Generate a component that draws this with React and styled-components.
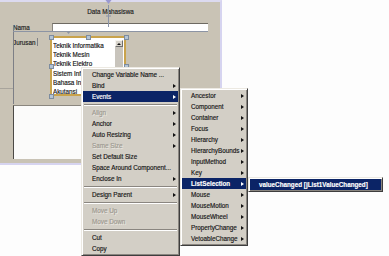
import React from "react";
import styled, { createGlobalStyle, css } from "styled-components";

const GlobalStyle = createGlobalStyle`
  html, body {
    margin: 0;
    padding: 0;
    background: #fdfdfd;
  }
  body {
    font-family: "Liberation Sans", Arial, sans-serif;
    font-size: 6.3px;
    color: #161616;
    -webkit-text-stroke: 0.15px currentColor;
  }
`;

const Page = styled.div`
  position: relative;
  width: 389px;
  height: 256px;
  overflow: hidden;
  background: #fdfdfd;
`;

const Form = styled.div`
  position: relative;
  width: 208px;
  height: 158px;
  padding: 0 12px 3px 0;
  background: #c9c3b5;
  border-top: 2px solid #dcdaf0;
  border-right: 2px solid #d6d4f0;
  border-bottom: 2px solid #d6d4f0;
  display: flex;
  flex-direction: column;
`;

const Title = styled.div`
  margin-top: 5px;
  height: 10px;
  line-height: 10px;
  padding-left: 13px;
  text-align: center;
  color: #202020;
`;

const Row = styled.div`
  display: grid;
  grid-template-columns: 37px 1fr;
  padding-left: 13px;
  margin-top: ${({ $gap }) => $gap}px;
`;

const Label = styled.div`
  line-height: ${({ $lh }) => $lh}px;
  white-space: nowrap;
  color: #1c1c1c;
`;

const TextField = styled.div`
  margin-left: 2px;
  height: 7px;
  background: #fff;
  border-top: 1px solid #6e6a62;
  border-left: 1px solid #8a867e;
`;

const ListBox = styled.div`
  position: relative;
  width: 72px;
  height: 56px;
  border: 2px solid #c9a34c;
  background: #fff;
  display: flex;
`;

const ListItems = styled.div`
  flex: 1;
  padding: 3px 0 0 1px;
`;

const ListItem = styled.div`
  height: 9.2px;
  line-height: 9.2px;
  white-space: nowrap;
  overflow: hidden;
  color: #141414;
`;

const ScrollBar = styled.div`
  width: 8px;
  margin: 2px 1px 2px 0;
  display: flex;
  flex-direction: column;
  background: #c8c4bc;
`;

const ScrollButton = styled.div`
  height: 7px;
  background: #d8d4cc;
  border: 1px solid;
  border-color: #f6f4f0 #707070 #707070 #f6f4f0;
  box-sizing: border-box;
  display: flex;
  align-items: center;
  justify-content: center;
  &::before {
    content: "";
    border-left: 2px solid transparent;
    border-right: 2px solid transparent;
    border-bottom: 2px solid #111;
  }
`;

const Handle = styled.span`
  position: absolute;
  width: 3px;
  height: 3px;
  background: #b4c4d4;
  border: 1px solid #7c8ca0;
  ${({ $x, $y }) => css`
    left: ${$x};
    top: ${$y};
  `}
`;

const TextArea = styled.div`
  margin: 9px 0 0 13px;
  height: 53px;
  background: #fbfbfa;
  border-left: 1px solid #4c4a46;
  border-top: 1px solid #8a867e;
`;

const Guides = styled.svg`
  position: absolute;
  left: 0;
  top: -2px;
  pointer-events: none;
`;

const Menu = styled.div`
  position: absolute;
  left: ${({ $x }) => $x}px;
  top: ${({ $y }) => $y}px;
  width: ${({ $w }) => $w}px;
  box-sizing: border-box;
  padding: 1px;
  background: #d3cfc6;
  border: 1px solid;
  border-color: #ece9e2 #3e3e3e #3e3e3e #ece9e2;
  box-shadow: inset 1px 1px #fff, inset -1px -1px #8a8680;
`;

const Item = styled.div`
  height: 11px;
  display: flex;
  align-items: center;
  padding: 0 2px 0 9px;
  white-space: nowrap;
  color: ${({ $disabled }) => ($disabled ? "#9d9990" : "#151515")};
  text-shadow: ${({ $disabled }) => ($disabled ? "1px 1px 0 #ebe8e2" : "none")};
  ${({ $active }) =>
    $active &&
    css`
      background: #0b2466;
      color: #fff;
      font-weight: bold;
    `}
`;

const Arrow = styled.span`
  margin-left: auto;
  width: 0;
  height: 0;
  border-top: 2.5px solid transparent;
  border-bottom: 2.5px solid transparent;
  border-left: 3px solid ${({ $active }) => ($active ? "#fff" : "#111")};
`;

const Separator = styled.div`
  height: 5px;
  display: flex;
  align-items: center;
  padding: 0 1px;
  &::before {
    content: "";
    flex: 1;
    height: 1px;
    background: #8a8680;
    border-bottom: 1px solid #fff;
  }
`;

const SEP = "sep";

const mainMenu = [
  { label: "Change Variable Name ..." },
  { label: "Bind", sub: true },
  { label: "Events", sub: true, active: true, normal: true },
  SEP,
  { label: "Align", sub: true, disabled: true },
  { label: "Anchor", sub: true },
  { label: "Auto Resizing", sub: true },
  { label: "Same Size", sub: true, disabled: true },
  { label: "Set Default Size" },
  { label: "Space Around Component..." },
  { label: "Enclose In", sub: true },
  SEP,
  { label: "Design Parent", sub: true },
  SEP,
  { label: "Move Up", disabled: true },
  { label: "Move Down", disabled: true },
  SEP,
  { label: "Cut" },
  { label: "Copy" },
];

const eventsMenu = [
  "Ancestor",
  "Component",
  "Container",
  "Focus",
  "Hierarchy",
  "HierarchyBounds",
  "InputMethod",
  "Key",
  "ListSelection",
  "Mouse",
  "MouseMotion",
  "MouseWheel",
  "PropertyChange",
  "VetoableChange",
].map((label) => ({ label, sub: true, active: label === "ListSelection" }));

const jurusan = [
  "Teknik Informatika",
  "Teknik Mesin",
  "Teknik Elektro",
  "Sistem Informasi",
  "Bahasa Inggris",
  "Akutansi",
];

const MenuList = ({ items, x, y, w }) => (
  <Menu $x={x} $y={y} $w={w}>
    {items.map((it, i) =>
      it === SEP ? (
        <Separator key={i} />
      ) : (
        <Item
          key={i}
          $active={it.active}
          $disabled={it.disabled}
          style={it.normal ? { fontWeight: "normal" } : undefined}
        >
          {it.label}
          {it.sub && <Arrow $active={it.active} />}
        </Item>
      )
    )}
  </Menu>
);

const App = () => {
  return (
    <Page>
      <GlobalStyle />
      <Form>
        <Guides width="222" height="167">
          <path d="M105.5 0 L111.5 0 L108.5 4 Z" fill="#9a98d0" />
          <line x1="108.5" y1="5" x2="108.5" y2="27" stroke="#8a94a8" />
          <path d="M106 16 h5" stroke="#8a94a8" />
          <line x1="13.5" y1="25" x2="13.5" y2="104" stroke="#7d7f86" />
          <line x1="13" y1="31.5" x2="208" y2="31.5" stroke="#8c94a4" />
          <path d="M66 31 h5 l-2.5 3 Z" fill="#8c94a4" />
          <line x1="0" y1="88.5" x2="13" y2="88.5" stroke="#a8a49c" />
          <line x1="37.5" y1="38" x2="37.5" y2="46" stroke="#7d7f86" />
        </Guides>
        <Title>Data Mahasiswa</Title>
        <Row $gap={6}>
          <Label $lh={9}>Nama</Label>
          <TextField />
        </Row>
        <Row $gap={4}>
          <Label $lh={14}>Jurusan</Label>
          <ListBox>
            <ListItems>
              {jurusan.map((j) => (
                <ListItem key={j}>{j}</ListItem>
              ))}
            </ListItems>
            <ScrollBar>
              <ScrollButton />
            </ScrollBar>
            <Handle $x="-3.5px" $y="-3.5px" />
            <Handle $x="34px" $y="-3.5px" />
            <Handle $x="72px" $y="-3.5px" />
            <Handle $x="-3.5px" $y="26px" />
            <Handle $x="72px" $y="26px" />
            <Handle $x="-3.5px" $y="56px" />
          </ListBox>
        </Row>
        <TextArea />
      </Form>
      <MenuList items={mainMenu} x={81} y={67} w={99} />
      <MenuList items={eventsMenu} x={180} y={88} w={68} />
      <MenuList
        items={[{ label: "valueChanged [jList1ValueChanged]", active: true }]}
        x={248}
        y={177}
        w={135}
      />
    </Page>
  );
};

export default App;
